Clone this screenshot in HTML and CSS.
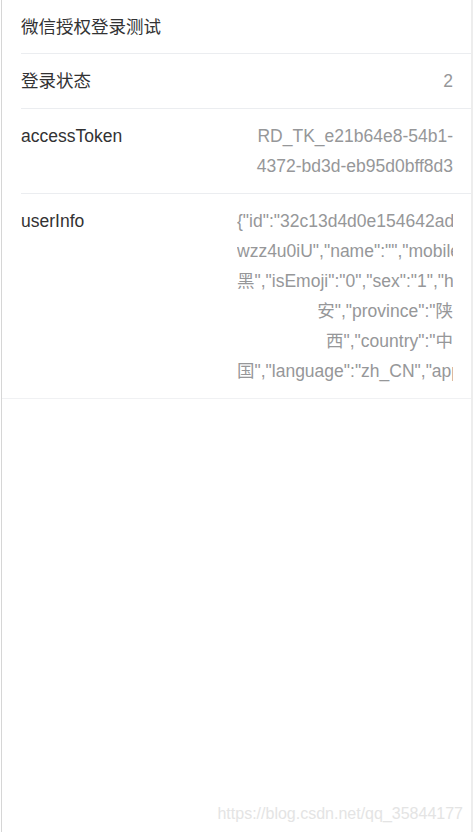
FILE: index.html
```html
<!DOCTYPE html>
<html lang="zh-CN">
<head>
<meta charset="utf-8">
<title>微信授权登录测试</title>
<link rel="stylesheet" href="styles.css">
</head>
<body>
<div class="frame">
  <div class="group">
    <div class="cell cell-head">
      <div class="cell-inner">
        <div class="cell-title">微信授权登录测试</div>
      </div>
    </div>
    <div class="cell">
      <div class="cell-inner">
        <div class="cell-title">登录状态</div>
        <div class="cell-value">2</div>
      </div>
    </div>
    <div class="cell">
      <div class="cell-inner">
        <div class="cell-title">accessToken</div>
        <div class="cell-value">RD_TK_e21b64e8-54b1-4372-bd3d-eb95d0bff8d3</div>
      </div>
    </div>
    <div class="cell cell-last">
      <div class="cell-inner">
        <div class="cell-title">userInfo</div>
        <div class="cell-value">{"id":"32c13d4d0e154642ad8f1c","openId":"oQ8Ab-wzz4u0iU","name":"","mobile":"","nickname":"小黑","isEmoji":"0","sex":"1","headimgurl":"","city":"西安","province":"陕西","country":"中国","language":"zh_CN","appId":"wx8a1b2c3d4e5f"}</div>
      </div>
    </div>
  </div>
  <div class="watermark">https://blog.csdn.net/qq_35844177</div>
</div>
</body>
</html>
```

FILE: styles.css
```css
html, body {
  margin: 0;
  padding: 0;
  background: #ffffff;
}

body {
  font-family: "Liberation Sans", Arial, "Noto Sans CJK SC", sans-serif;
  font-size: 17.5px;
  color: #323233;
}

.frame {
  position: relative;
  box-sizing: border-box;
  width: 472px;
  height: 832px;
  margin-left: 1px;
  border-left: 1px solid #d6d6d6;
  border-right: 2px solid #ededed;
}

.group {
  border-bottom: 1px solid #f0f1f3;
}

.cell {
  padding-left: 19px;
}

.cell-inner {
  display: flex;
  padding: 12px 18px 12px 0;
  line-height: 30px;
  border-bottom: 1px solid #ebedf0;
}

.cell-head .cell-inner {
  padding-bottom: 11px;
}

.cell-last .cell-inner {
  border-bottom: none;
}

.cell-title {
  flex: 1;
  min-width: 0;
  color: #323233;
}

.cell-value {
  flex: 1;
  min-width: 0;
  overflow: hidden;
  text-align: right;
  color: #969799;
}

.watermark {
  position: absolute;
  right: 8px;
  bottom: 8px;
  font-size: 16px;
  line-height: 20px;
  color: #e4e4e4;
}
```
